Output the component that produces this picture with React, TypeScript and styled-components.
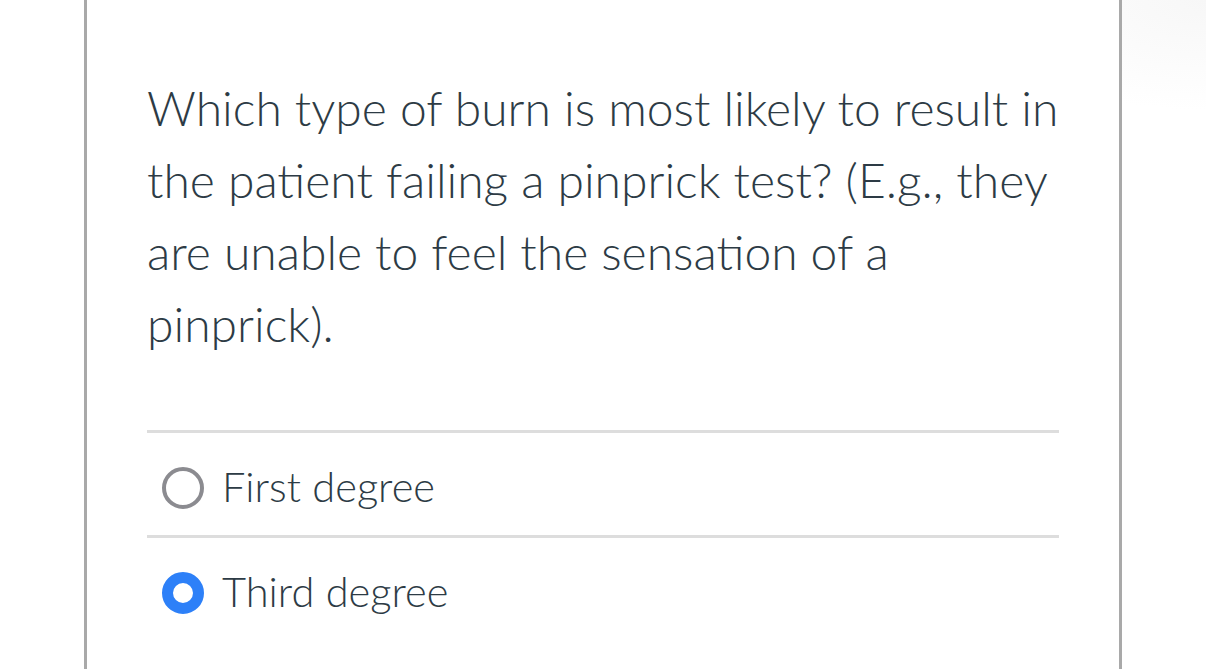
import styled, { createGlobalStyle } from "styled-components";

const GlobalStyle = createGlobalStyle`
	html, body {
		margin: 0;
		padding: 0;
		height: 100%;
		background: #ffffff;
	}
	body {
		font-family: Lato, "Open Sans", sans-serif;
		background: radial-gradient(ellipse 240px 110px at 100% 0%, #f7f7f7 0%, rgba(255, 255, 255, 0) 100%) no-repeat, #ffffff;
		overflow: hidden;
	}
	#root {
		height: 100%;
	}
`;

type Answer = { id: string; label: string };

const answers: Answer[] = [
	{ id: "first", label: "First degree" },
	{ id: "third", label: "Third degree" },
];

const App = () => {
	const selected = "third";

	return (
		<>
			<GlobalStyle />
			<Page>
				<Card>
					<Question>
						Which type of burn is most likely to result in the patient failing a pinprick test? (E.g., they are unable to
						feel the sensation of a pinprick).
					</Question>

					<AnswerList>
						{answers.map((a) => (
							<AnswerRow key={a.id}>
								<Radio $checked={a.id === selected} />
								<AnswerLabel>{a.label}</AnswerLabel>
							</AnswerRow>
						))}
					</AnswerList>
				</Card>
			</Page>
		</>
	);
};

export default App;

const Page = styled.div`
	height: 100%;
	padding-left: 84px;
	box-sizing: border-box;
`;

const Card = styled.div`
	width: 1038px;
	height: 100%;
	box-sizing: border-box;
	border-left: 3px solid #a9a9a9;
	border-right: 3px solid #a9a9a9;
	background: #ffffff;
	padding: 72px 60px 0 60px;
`;

const Question = styled.p`
	margin: 0;
	font-size: 48px;
	line-height: 72px;
	font-weight: 300;
	color: #2d3b45;
`;

const AnswerList = styled.div`
	margin-top: 70px;
	display: flex;
	flex-direction: column;
`;

const AnswerRow = styled.label`
	display: flex;
	align-items: center;
	gap: 18px;
	height: 102px;
	padding-left: 15px;
	border-top: 3px solid #dddddd;
`;

/* 체크되면 파란 원 + 흰 점 */
const Radio = styled.span<{ $checked: boolean }>`
	flex: none;
	width: 42px;
	height: 42px;
	box-sizing: border-box;
	border-radius: 50%;
	margin-top: 8px;
	border: ${(props) => (props.$checked ? "11px solid #2d80f8" : "4px solid #8b8b90")};
	background: #ffffff;
`;

const AnswerLabel = styled.span`
	font-size: 41.6px;
	line-height: 60px;
	padding-top: 4px;
	font-weight: 300;
	color: #2d3b45;
`;
